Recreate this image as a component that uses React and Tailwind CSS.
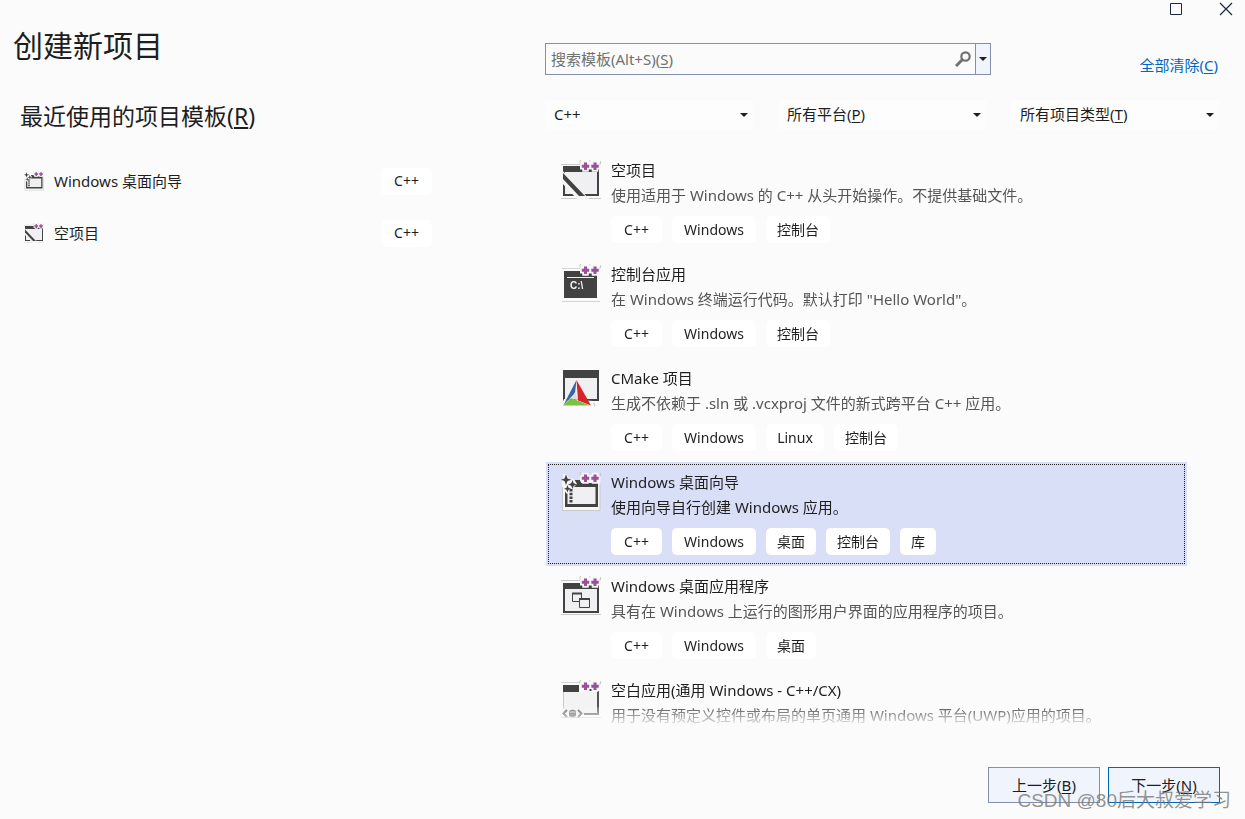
import React, { useState } from 'react';

const TEMPLATES = [
  {
    id: 'empty',
    title: '空项目',
    description: '使用适用于 Windows 的 C++ 从头开始操作。不提供基础文件。',
    tags: ['C++', 'Windows', '控制台'],
  },
  {
    id: 'console',
    title: '控制台应用',
    description: '在 Windows 终端运行代码。默认打印 "Hello World"。',
    tags: ['C++', 'Windows', '控制台'],
  },
  {
    id: 'cmake',
    title: 'CMake 项目',
    description: '生成不依赖于 .sln 或 .vcxproj 文件的新式跨平台 C++ 应用。',
    tags: ['C++', 'Windows', 'Linux', '控制台'],
  },
  {
    id: 'wizard',
    title: 'Windows 桌面向导',
    description: '使用向导自行创建 Windows 应用。',
    tags: ['C++', 'Windows', '桌面', '控制台', '库'],
  },
  {
    id: 'desktop',
    title: 'Windows 桌面应用程序',
    description: '具有在 Windows 上运行的图形用户界面的应用程序的项目。',
    tags: ['C++', 'Windows', '桌面'],
  },
  {
    id: 'uwp',
    title: '空白应用(通用 Windows - C++/CX)',
    description: '用于没有预定义控件或布局的单页通用 Windows 平台(UWP)应用的项目。',
    tags: [],
  },
];

const RECENT = [
  { id: 'wizard', title: 'Windows 桌面向导', tag: 'C++' },
  { id: 'empty', title: '空项目', tag: 'C++' },
];

const TAG_WIDTHS = {
  'C++': 'w-[51px]',
  Windows: 'w-[84px]',
  Linux: 'w-[58px]',
};

const PLUS_PATH = 'M23 2.500h3v2.200h2.200v3h-2.200v2.200h-3v-2.200h-2.200v-3h2.200zM32.500 2.500h3v2.200h2.200v3h-2.200v2.200h-3v-2.200h-2.200v-3h2.200z';

const PlusPlus = () => (
  <>
    <path d={PLUS_PATH} fill="#f6f6f6" stroke="#f6f6f6" strokeWidth="3.500" />
    <path d={PLUS_PATH} fill="#9b4f96" />
    <path d="M20 .5h-1v3M29 0v1.500M39.500 1v3h-1.500" fill="none" stroke="#c9c9c9" />
  </>
);

const Edges = () => <path d="M0 4.500h19M0 38.500h40" stroke="#c9c9c9" fill="none" />;

const TemplateIcon = ({ id, className }) => (
  <svg viewBox="0 0 40 40" className={className} aria-hidden="true">
    {id === 'empty' && (
      <>
        <Edges />
        <path d="M2 6h36v30H2z" fill="#424242" />
        <path d="M4 12h32v22H4z" fill="#f0eff1" />
        <path d="M0 9l29 31h-12L0 22z" fill="#f6f6f6" />
        <path d="M2 13l22 23h-6L2 19z" fill="#424242" />
      </>
    )}
    {id === 'console' && (
      <>
        <path d="M1 4.500h18M1 37.500h38" stroke="#d4d4d4" />
        <path d="M3 7h33v27H3z" fill="#424242" />
        <path d="M6 13.500h27" stroke="#f0eff1" />
        <text x="9" y="25" fontSize="10" fontWeight="700" fill="#f6f6f6" fontFamily="Liberation Sans, sans-serif">
          C:\
        </text>
      </>
    )}
    {id === 'cmake' && (
      <>
        <path d="M2 2h36v31H2z" fill="#424242" />
        <path d="M4 10h32v21H4z" fill="#f0eff1" />
        <path d="M3 31l-3 8h32v-6z" fill="#fbfbfb" />
        <path d="M15.500 12L2.500 37 14 25z" fill="#3465a4" />
        <path d="M15.500 12L30 37.500l-13-5z" fill="#d8232a" />
        <path d="M2 37.500L10 30l19 7.500z" fill="#7ac143" />
        <path d="M14 24l3 8.500-6-2.500z" fill="#dcdcdc" />
        <path d="M32 35.500h1.500v3" stroke="#c9c9c9" fill="none" />
      </>
    )}
    {id === 'wizard' && (
      <>
        <path d="M1 8h38v30H1z" fill="#f6f6f6" />
        <path d="M1.500 15v23.500h37.500V12" fill="none" stroke="#c9c9c9" />
        <path d="M4 11h33v24H4z" fill="#424242" />
        <path d="M12 8h8v4h-8z" fill="#424242" />
        <path d="M6.500 15h28v17h-28z" fill="#f0eff1" />
        <path d="M5 2l3 4 5 1 3 5-4 4-2 4-4 2-4-5V2z" fill="#f6f6f6" />
        <path d="M10 17v14" stroke="#424242" strokeWidth="3" strokeDasharray="2.500 1.200" />
        <path
          d="M5 2.500l1.500 4 4 1.200-4 1.300L5 13l-1.500-4-3.500-1.300 3.500-1.200zM11.500 8l1.200 3.300 3.300 1.200-3.300 1.200-1.200 3.300-1.200-3.300L7 12.500l3.300-1.200zM6.500 13l1 2.700 2.500 1-2.500 1-1 2.800-1-2.800-2.500-1 2.500-1z"
          fill="#424242"
        />
      </>
    )}
    {id === 'desktop' && (
      <>
        <Edges />
        <path d="M2 7h36v30H2z" fill="#424242" />
        <path d="M4 13h32v22H4z" fill="#f0eff1" />
        <path d="M11.500 17.500h9v8h-9z" fill="#f0eff1" stroke="#424242" />
        <path d="M11 17.500h10" stroke="#424242" strokeWidth="2" />
        <path d="M18.500 22.500h10v9h-10z" fill="#f0eff1" stroke="#424242" />
        <path d="M18 23h11" stroke="#424242" strokeWidth="2" />
      </>
    )}
    {id === 'uwp' && (
      <>
        <path d="M0 2.500h19M0 37.500h40" stroke="#d4d4d4" />
        <path d="M2 12h35v23H2z" fill="#f3f3f3" />
        <path d="M2.500 12v16" stroke="#c9c9c9" />
        <path d="M2 5h16v7H2z" fill="#424242" />
        <path d="M37 11v16" stroke="#555" strokeWidth="2" />
        <path d="M37 27v6" stroke="#777" strokeWidth="2" />
        <path d="M23 34h15" stroke="#777" strokeWidth="2" />
        <path d="M6 30l-3.500 3.500L6 37M17 30l3.500 3.500L17 37" fill="none" stroke="#777" strokeWidth="2" />
        <path d="M8 31q3.500-2.500 7 0v5q-3.500 2.500-7 0z" fill="#777" />
        <path d="M8.500 32h6" stroke="#e4e4e4" />
      </>
    )}
    {id !== 'cmake' && <PlusPlus />}
    {id === 'uwp' && <path d="M28.500 9h2v2h-2z" fill="#424242" />}
  </svg>
);

const Caret = ({ className = '' }) => (
  <svg viewBox="0 0 8 4" className={`h-1 w-2 ${className}`} aria-hidden="true">
    <path d="M0 0h8L4 4z" fill="#1e1e1e" />
  </svg>
);

const Tag = ({ children }) => (
  <span
    className={`flex h-[27px] items-center justify-center rounded-[5px] bg-white text-sm text-[#1e1e1e] ${
      TAG_WIDTHS[children] || 'px-[11px]'
    }`}
  >
    {children}
  </span>
);

const Filter = ({ id, label, hotkey, options }) => {
  const [value, setValue] = useState('');

  return (
    <div className="relative flex h-[29px] items-center bg-[#fdfdfd]">
      <select
        id={id}
        value={value}
        onChange={(e) => setValue(e.target.value)}
        className="h-full w-full appearance-none bg-transparent pl-[9px] outline-none"
      >
        <option value="" aria-label={label}></option>
        {options.map((option) => (
          <option key={option}>{option}</option>
        ))}
      </select>
      <label
        htmlFor={id}
        className={`pointer-events-none absolute left-[9px] ${value ? 'sr-only' : ''}`}
      >
        {label}
        {hotkey && (
          <>
            (<u className="underline-offset-2">{hotkey}</u>)
          </>
        )}
      </label>
      <Caret className="pointer-events-none absolute right-[5px]" />
    </div>
  );
};

const TemplateItem = ({ template, selected, onSelect }) => (
  <li className={`h-[104px] p-0.5 ${selected ? 'bg-[#dadff8]' : ''}`}>
    <button
      type="button"
      onClick={() => onSelect(template.id)}
      className={`flex h-full w-full items-start gap-[10px] border border-dotted pt-[5px] pl-3 text-left ${
        selected ? 'border-[#1e1e1e]' : 'border-transparent'
      }`}
    >
      <TemplateIcon id={template.id} className="mt-0.5 h-10 w-10 shrink-0" />
      <span className="block leading-[25px] whitespace-nowrap">
        <span className="block">{template.title}</span>
        <span className={`block ${selected ? '' : 'text-[#555555]'}`}>{template.description}</span>
        <span className="mt-2 flex gap-[10px]">
          {template.tags.map((tag) => (
            <Tag key={tag}>{tag}</Tag>
          ))}
        </span>
      </span>
    </button>
  </li>
);

function App() {
  const [query, setQuery] = useState('');
  const [selected, setSelected] = useState('wizard');

  return (
    <div className="relative flex h-screen flex-col bg-[#fbfbfb] font-['Noto_Sans','Noto_Sans_CJK_SC',sans-serif] text-[15px] text-[#1e1e1e]">
      <div className="flex h-[19px] shrink-0 items-start justify-end gap-[36px] pt-0.5 pr-3">
        <button type="button" aria-label="最大化">
          <svg viewBox="0 0 14 14" className="block h-[14px] w-[14px]">
            <path d="M1.500 1.500h11v11h-11z" fill="none" stroke="#1b293e" />
          </svg>
        </button>
        <button type="button" aria-label="关闭">
          <svg viewBox="0 0 14 14" className="block h-[14px] w-[14px]">
            <path d="M1 1l12 12M13 1L1 13" fill="none" stroke="#1b293e" strokeWidth="1.200" />
          </svg>
        </button>
      </div>

      <main className="flex min-h-0 flex-1">
        <section className="w-[545px] shrink-0 pt-[7px]">
          <h1 className="pl-[13px] text-[30px] leading-10">创建新项目</h1>
          <h2 className="mt-8 pl-5 text-[23px] leading-9">
            最近使用的项目模板(<u className="underline-offset-2">R</u>)
          </h2>
          <ul className="mt-[21px] w-[432px]">
            {RECENT.map((item) => (
              <li key={item.id}>
                <button type="button" className="flex h-[52px] w-full items-center pl-6 text-left">
                  <TemplateIcon id={item.id} className="h-5 w-5" />
                  <span className="ml-[10px] flex-1">{item.title}</span>
                  <Tag>{item.tag}</Tag>
                </button>
              </li>
            ))}
          </ul>
        </section>

        <section className="flex min-w-0 flex-1 flex-col pt-6 pr-[26px]">
          <div className="flex justify-between">
            <div className="relative flex h-8 w-[446px] border border-[#858faa]">
              <input
                id="search"
                type="text"
                value={query}
                onChange={(e) => setQuery(e.target.value)}
                className="min-w-0 flex-1 bg-transparent pl-[5px] outline-none"
              />
              <label
                htmlFor="search"
                className={`pointer-events-none absolute top-1 left-[5px] text-[#717171] ${query ? 'sr-only' : ''}`}
              >
                搜索模板(Alt+S)(<u className="underline-offset-2">S</u>)
              </label>
              <button type="button" aria-label="搜索" className="flex w-5 items-center">
                <svg viewBox="0 0 16 16" className="h-4 w-4">
                  <circle cx="10.500" cy="5.500" r="4.200" fill="none" stroke="#717171" strokeWidth="2.200" />
                  <path d="M7.500 8.500L1 15" stroke="#717171" strokeWidth="3" />
                </svg>
              </button>
              <button
                type="button"
                aria-label="搜索选项"
                className="flex w-[15px] items-center justify-center border-l border-[#858faa] bg-[#f0f4fd]"
              >
                <Caret />
              </button>
            </div>
            <a href="#clear" className="mt-3 mr-px leading-5 text-[#0067c0]">
              全部清除(<u className="underline-offset-2">C</u>)
            </a>
          </div>

          <div className="mt-[25px] grid grid-cols-3 gap-[25px]">
            <Filter id="language" label="C++" options={['C#', 'Python']} />
            <Filter id="platform" label="所有平台" hotkey="P" options={['Windows', 'Linux']} />
            <Filter id="type" label="所有项目类型" hotkey="T" options={['控制台', '桌面', '库']} />
          </div>

          <ul className="mt-[21px] mr-8 ml-px min-h-0 flex-1 overflow-hidden [mask-image:linear-gradient(to_top,transparent,black_20px)]">
            {TEMPLATES.map((template) => (
              <TemplateItem
                key={template.id}
                template={template}
                selected={template.id === selected}
                onSelect={setSelected}
              />
            ))}
          </ul>
        </section>
      </main>

      <footer className="mt-10 mb-4 flex shrink-0 justify-end gap-2 pr-[25px]">
        <button type="button" className="h-9 w-28 border border-[#858faa] bg-[#f0f4fd]">
          上一步(<u className="underline-offset-2">B</u>)
        </button>
        <button type="button" className="h-9 w-28 border border-[#0067b8] bg-[#f0f4fd]">
          下一步(<u className="underline-offset-2">N</u>)
        </button>
      </footer>

      <p className="pointer-events-none absolute right-[14px] bottom-1 font-['Liberation_Sans','Noto_Sans_CJK_SC',sans-serif] text-[19px] leading-7 text-[#777777]/80">
        CSDN @80后大叔爱学习
      </p>
    </div>
  );
}

export default App;
